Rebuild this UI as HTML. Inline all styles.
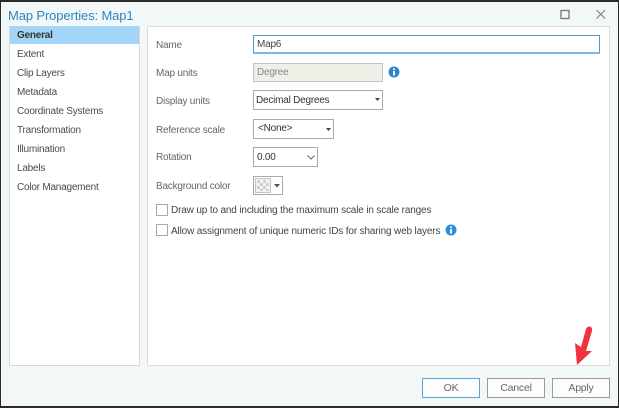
<!DOCTYPE html>
<html><head><meta charset="utf-8"><style>
html,body{margin:0;padding:0}
body{width:619px;height:408px;overflow:hidden;position:relative;background:#f2f8f7;font-family:"Liberation Sans",sans-serif;font-size:10px;letter-spacing:-.22px;color:#444}
div,span{position:absolute;box-sizing:border-box;white-space:nowrap}
.t{line-height:14px}
.l{left:17px;color:#4a4a4a}
.f{left:156px;color:#666}
.b{background:#fff;border:1px solid #a8a8a8;color:#333;line-height:20px;padding-left:2px}
.btn{top:378px;height:20px;background:#fdfdfd;border:1px solid #9a9a9a;text-align:center;line-height:18px;color:#666;font-size:10.500px}
.cb{left:156px;width:12px;height:12px;background:#fff;border:1px solid #aaa}
.c{letter-spacing:-.15px;color:#444}
</style></head><body>
<div style="left:0;top:0;width:619px;height:408px;border:solid #2b2b2b;border-width:2px 1px 2px 1px;z-index:5;pointer-events:none"></div>
<div class="t" style="left:8px;top:7px;font-size:13px;letter-spacing:-.12px;line-height:18px;color:#2d86c0">Map Properties: Map1</div>
<svg style="position:absolute;left:555px;top:8px" width="52" height="14"><rect x="6" y="2.500" width="8" height="8" fill="none" stroke="#777" stroke-width="1.300"/><path d="M41.500 2L50 10.500M50 2L41.500 10.500" stroke="#777" stroke-width="1" fill="none"/></svg>

<div style="left:9px;top:26px;width:131px;height:340px;background:#fff;border:1px solid #d8d8d8;border-top:0"></div>
<div style="left:10px;top:26px;width:129px;height:18px;background:#a2d5f7"></div>
<div class="t l" style="top:29px;font-weight:bold;color:#333">General</div>
<div class="t l" style="top:48px">Extent</div>
<div class="t l" style="top:67px">Clip Layers</div>
<div class="t l" style="top:86px">Metadata</div>
<div class="t l" style="top:105px">Coordinate Systems</div>
<div class="t l" style="top:124px">Transformation</div>
<div class="t l" style="top:143px">Illumination</div>
<div class="t l" style="top:162px">Labels</div>
<div class="t l" style="top:181px">Color Management</div>

<div style="left:147px;top:26px;width:463px;height:340px;background:#fff;border:1px solid #dcdcdc"></div>

<div class="t f" style="top:39px">Name</div>
<div class="t f" style="top:67px">Map units</div>
<div class="t f" style="top:95px">Display units</div>
<div class="t f" style="top:124px">Reference scale</div>
<div class="t f" style="top:151px">Rotation</div>
<div class="t f" style="top:180px">Background color</div>

<div class="b" style="left:253px;top:35px;width:347px;height:19px;border:1px solid #4a9bd4;border-bottom:2px solid #7ab8e6;color:#444;padding-left:3px;line-height:18px">Map6</div>
<div class="b" style="left:253px;top:63px;width:130px;height:19px;background:#efefe8;border-color:#c4c4c4;color:#888;padding-left:3px;line-height:18px">Degree</div>
<svg style="position:absolute;left:388px;top:66px" width="12" height="12"><circle cx="6" cy="6" r="5.500" fill="#2a86c8"/><rect x="5" y="5" width="2" height="4.500" fill="#fff"/><rect x="5" y="2.500" width="2" height="1.500" fill="#fff"/></svg>
<div class="b" style="left:253px;top:90px;width:130px;height:20px">Decimal Degrees</div>
<svg style="position:absolute;left:375px;top:98px" width="5" height="4"><path d="M0 0H5L2.500 3Z" fill="#444"/></svg>
<div class="b" style="left:253px;top:119px;width:81px;height:20px;padding-left:4px;line-height:18px">&lt;None&gt;</div>
<svg style="position:absolute;left:326px;top:128px" width="5" height="4"><path d="M0 0H5L2.500 3Z" fill="#444"/></svg>
<div class="b" style="left:253px;top:147px;width:65px;height:20px;padding-left:3px">0.00</div>
<svg style="position:absolute;left:307px;top:155px" width="8" height="5"><path d="M.5 .5L4 4L7.500 .5" fill="none" stroke="#666"/></svg>
<div class="b" style="left:253px;top:176px;width:30px;height:19px"></div>
<svg style="position:absolute;left:255px;top:178px" width="16" height="15"><rect x=".5" y=".5" width="15" height="14" fill="#f4f4f4" stroke="#c4c4c4"/><path d="M2 2h3v3H2zM8 2h3v3H8zM5 5h3v3H5zM11 5h3v3h-3zM2 8h3v3H2zM8 8h3v3H8zM5 11h3v2H5zM11 11h3v2h-3z" fill="#cfcfcf"/></svg>
<svg style="position:absolute;left:274px;top:184px" width="6" height="4"><path d="M0 0H6L3 3.500Z" fill="#555"/></svg>

<div class="cb" style="top:204px"></div>
<div class="t c" style="left:171px;top:204px">Draw up to and including the maximum scale in scale ranges</div>
<div class="cb" style="top:224px"></div>
<div class="t c" style="left:171px;top:225px">Allow assignment of unique numeric IDs for sharing web layers</div>
<svg style="position:absolute;left:445px;top:224px" width="12" height="12"><circle cx="6" cy="6" r="5.500" fill="#2a90d8"/><rect x="5" y="5" width="2" height="4.500" fill="#fff"/><rect x="5" y="2.500" width="2" height="1.500" fill="#fff"/></svg>

<div class="btn" style="left:422px;width:58px;border-color:#56a5dc">OK</div>
<div class="btn" style="left:487px;width:58px">Cancel</div>
<div class="btn" style="left:552px;width:58px">Apply</div>

<svg style="position:absolute;left:0;top:0" width="619" height="408"><path d="M586 329C588 325 593 326 592 331L586 351L592 351L577 365L575 343L581 347Z" fill="#f0333c"/></svg>
</body></html>
